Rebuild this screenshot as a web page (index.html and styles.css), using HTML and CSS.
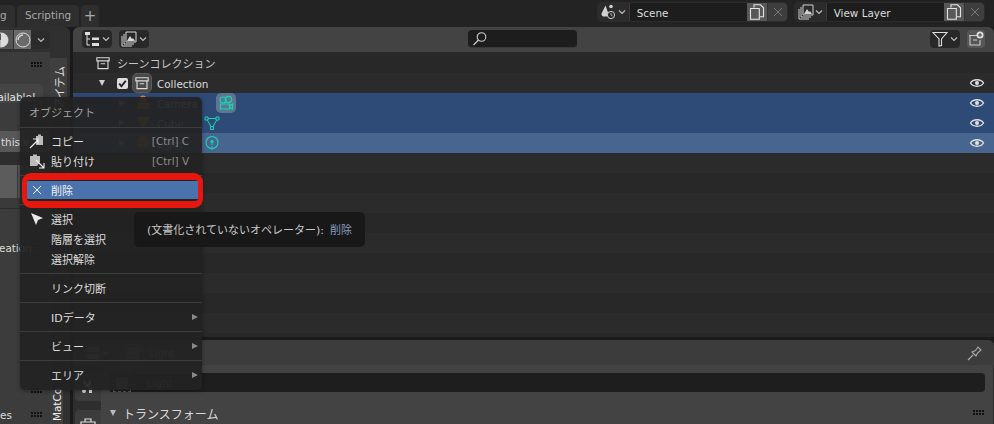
FILE: index.html
```html
<!DOCTYPE html>
<html lang="ja">
<head>
<meta charset="utf-8">
<title>Blender</title>
<link rel="stylesheet" href="styles.css">
</head>
<body>
<svg class="defs" width="0" height="0" aria-hidden="true">
  <symbol id="i-box" viewBox="0 0 16 16"><path d="M1 2h14v3.500H1zM2.300 5.500V14.500h11.400V5.500M5.500 8.800h5" fill="none" stroke="currentColor" stroke-width="1.300"/></symbol>
  <symbol id="i-eye" viewBox="0 0 16 16"><path d="M1.500 8C4 3.700 12 3.700 14.500 8 12 12.300 4 12.300 1.500 8z" fill="none" stroke="currentColor" stroke-width="1.400"/><circle cx="8" cy="8" r="2" fill="currentColor"/></symbol>
  <symbol id="i-chev" viewBox="0 0 8 6"><path d="M1 1.500l3 3 3-3" fill="none" stroke="currentColor" stroke-width="1.200"/></symbol>
  <symbol id="i-copy" viewBox="0 0 16 16"><path d="M5 3.500V.8h6.500l3 3v9H11M1.500 4.500h8.800v10.700H1.500z" fill="none" stroke="currentColor" stroke-width="1.100"/></symbol>
  <symbol id="i-x" viewBox="0 0 12 12"><path d="M2 2l8 8M10 2l-8 8" fill="none" stroke="currentColor" stroke-width="1"/></symbol>
  <symbol id="i-layer" viewBox="0 0 16 16"><path d="M1 5v10h10M3 3v10h10" fill="none" stroke="currentColor" stroke-width="1"/><path d="M5 1h10v10H5z" fill="none" stroke="currentColor" stroke-width="1"/><path d="M6 10l3-5 2 3 1-1 2 3z" fill="currentColor"/></symbol>
</svg>

<div class="app">
  <div class="topbar">
    <div class="tabs">
      <span class="tab tab-cut">g</span>
      <span class="tab tab-script">Scripting</span>
      <span class="tab tab-plus">+</span>
    </div>
    <div class="grow"></div>
    <div class="selector">
      <span class="sel-icon">
        <svg class="ic16" viewBox="0 0 16 16"><path d="M4.500 1.500L7 8.500a3 3 0 0 1-1 4H2a3 3 0 0 1-1-4z" fill="#d0d0d0"/><circle cx="10" cy="2.500" r="1.800" fill="#d0d0d0"/><circle cx="10" cy="11" r="3.600" fill="#282828" stroke="#d0d0d0"/><path d="M10 9v2l1.500 1" fill="none" stroke="#d0d0d0" stroke-width=".8"/></svg>
        <svg class="chev"><use href="#i-chev"/></svg>
      </span>
      <span class="sel-field">Scene</span>
      <span class="sel-copy"><svg class="ic16"><use href="#i-copy"/></svg></span>
      <span class="sel-x"><svg class="ic12"><use href="#i-x"/></svg></span>
    </div>
    <div class="selector">
      <span class="sel-icon">
        <svg class="ic16"><use href="#i-layer"/></svg>
        <svg class="chev"><use href="#i-chev"/></svg>
      </span>
      <span class="sel-field">View Layer</span>
      <span class="sel-copy"><svg class="ic16"><use href="#i-copy"/></svg></span>
      <span class="sel-x"><svg class="ic12"><use href="#i-x"/></svg></span>
    </div>
  </div>

  <div class="main">
    <div class="left">
      <div class="left-head">
        <span class="shade-half"><svg class="ic16" viewBox="0 0 16 16"><circle cx="4" cy="8" r="7" fill="none" stroke="#ddd"/><path d="M4 8V1a7 7 0 0 1 0 14z" fill="#ddd"/><path d="M-3 8a7 7 0 0 0 7 7V8z" fill="#bbb"/></svg></span>
        <span class="shade-ball"><svg class="ic16" viewBox="0 0 16 16"><circle cx="8" cy="8" r="7" fill="none" stroke="#ddd"/><path d="M3 8a5 5 0 0 1 5-5" fill="none" stroke="#ddd" stroke-width="1.300"/></svg></span>
        <span class="shade-drop"><svg class="chev"><use href="#i-chev"/></svg></span>
      </div>
      <div class="left-body">
        <div class="side">
          <div class="side-head"><span class="dots"></span></div>
          <div class="side-field"><span>ailable!</span></div>
          <div class="side-gap"></div>
          <div class="side-this"><span>this v</span></div>
          <div class="side-dark"></div>
          <div class="side-grey"><span class="grey-a"></span><span class="grey-b"></span></div>
          <div class="side-line"></div>
          <div class="side-eation"><span>eation</span><span class="dots"></span></div>
          <div class="grow"></div>
          <div class="side-dotrow"><span class="dots"></span></div>
          <div class="side-es"><span>es</span><span class="dots"></span></div>
        </div>
        <div class="vtabs">
          <span class="vtab vtab-item">アイテム</span>
          <div class="grow"></div>
          <span class="vtab vtab-mat">MatCo</span>
        </div>
      </div>
    </div>

    <div class="right">
      <div class="outliner">
        <div class="o-head">
          <span class="o-btn">
            <svg class="ic16" viewBox="0 0 16 16"><path d="M1 1h5v3H1z" fill="#ddd"/><path d="M3 4v10h3M3 8h3" fill="none" stroke="#ddd"/><path d="M8 6.500h7v2.500H8zM8 12h7v3H8z" fill="#ddd"/></svg>
            <svg class="chev"><use href="#i-chev"/></svg>
          </span>
          <span class="o-btn o-btn-layer">
            <svg class="ic16"><use href="#i-layer"/></svg>
            <svg class="chev"><use href="#i-chev"/></svg>
          </span>
          <div class="o-grow-l"></div>
          <span class="o-search">
            <svg class="ic16" viewBox="0 0 16 16"><circle cx="9.500" cy="6" r="4.300" fill="none" stroke="#ccc" stroke-width="1.100"/><path d="M6.500 9L1.500 14" stroke="#ccc" stroke-width="1.300"/></svg>
          </span>
          <div class="o-grow-r"></div>
          <span class="o-btn o-btn-filter">
            <svg class="ic16" viewBox="0 0 16 16"><path d="M1 1.500h14L9.500 8v6.500L7 15V8z" fill="none" stroke="#ddd" stroke-width="1.100"/></svg>
            <svg class="chev"><use href="#i-chev"/></svg>
          </span>
          <span class="o-new">
            <svg class="ic16" viewBox="0 0 16 16"><path d="M1 4.500h8M2 5v9h10V9M5 9h4" fill="none" stroke="#ccc" stroke-width="1.100"/><circle cx="12" cy="4" r="3.500" fill="#ddd"/><path d="M10 4h4M12 2v4" stroke="#444" stroke-width="1.100"/></svg>
          </span>
        </div>
        <div class="rows">
          <div class="row row-scene">
            <svg class="ic14 scene-box"><use href="#i-box"/></svg>
            <span class="row-label scene-label">シーンコレクション</span>
          </div>
          <div class="row row-even">
            <span class="tri tri-open"></span>
            <span class="check"><svg viewBox="0 0 10 10"><path d="M2 5l2 2.500 4-5" fill="none" stroke="#222" stroke-width="1.800"/></svg></span>
            <span class="box-active"><svg class="ic14"><use href="#i-box"/></svg></span>
            <span class="row-label">Collection</span>
            <div class="grow"></div>
            <svg class="ic16 eye"><use href="#i-eye"/></svg>
          </div>
          <div class="row row-sel">
            <span class="tri-side"></span>
            <svg class="ic16 obj" viewBox="0 0 16 16"><circle cx="8" cy="4" r="3.500" fill="#e58a3c"/><path d="M2 8h12v6H2z" fill="#e58a3c"/></svg>
            <span class="row-label">Camera</span>
            <span class="data-active">
              <svg class="ic16" viewBox="0 0 16 16"><circle cx="5" cy="5" r="3" fill="none" stroke="#19d6b0" stroke-width="1.200"/><circle cx="10.500" cy="4.500" r="3.200" fill="none" stroke="#19d6b0" stroke-width="1.200"/><path d="M2.500 9h9v5h-9zM11.500 11l3-2v5l-3-2" fill="none" stroke="#19d6b0" stroke-width="1.200"/></svg>
            </span>
            <div class="grow"></div>
            <svg class="ic16 eye"><use href="#i-eye"/></svg>
          </div>
          <div class="row row-sel">
            <span class="tri-side"></span>
            <svg class="ic16 obj" viewBox="0 0 16 16"><path d="M1 2h14L8 14z" fill="#e58a3c"/></svg>
            <span class="row-label">Cube</span>
            <svg class="ic16 data-plain" viewBox="0 0 16 16"><path d="M2.500 3.500h11L8.500 12.500h-1z" fill="none" stroke="#19d6b0"/><path d="M1 2h3v3H1zM12 2h3v3h-3zM6.500 11.500h3v3h-3z" fill="#2e4a75" stroke="#19d6b0"/></svg>
            <div class="grow"></div>
            <svg class="ic16 eye"><use href="#i-eye"/></svg>
          </div>
          <div class="row row-act">
            <span class="tri-side"></span>
            <svg class="ic16 obj" viewBox="0 0 16 16"><circle cx="8" cy="7" r="6" fill="#e58a3c"/></svg>
            <span class="row-label">Light</span>
            <svg class="ic16 data-plain" viewBox="0 0 16 16"><circle cx="8" cy="7.500" r="6" fill="none" stroke="#19d6b0" stroke-width="1.100"/><circle cx="8" cy="6.500" r="1.600" fill="#19d6b0"/><path d="M8 8v7" stroke="#19d6b0" stroke-width="1" stroke-dasharray="2 1"/></svg>
            <div class="grow"></div>
            <svg class="ic16 eye"><use href="#i-eye"/></svg>
          </div>
          <div class="row row-even"></div>
          <div class="row row-odd"></div>
          <div class="row row-even"></div>
          <div class="row row-odd"></div>
          <div class="row row-even"></div>
          <div class="row row-odd"></div>
          <div class="row row-even"></div>
          <div class="row row-odd"></div>
          <div class="row row-even"></div>
        </div>
      </div>

      <div class="props">
        <div class="p-head">
          <span class="p-toggle"><svg class="ic16" viewBox="0 0 16 16"><rect x="1" y="2" width="14" height="5" rx="2.500" fill="#888"/><rect x="1" y="9" width="14" height="5" rx="2.500" fill="#888"/></svg><svg class="chev"><use href="#i-chev"/></svg></span>
          <span class="p-light"><span class="p-square"></span>Light</span>
          <div class="grow"></div>
          <svg class="ic16 pin" viewBox="0 0 16 16"><path d="M1 15l5-5M5 7l4 4 1.500-3L14 5 11 2 8.500 5.500z" fill="none" stroke="#aaa" stroke-width="1.100"/></svg>
        </div>
        <div class="p-body">
          <div class="p-tabs">
            <span class="p-tab">
              <svg class="ic16" viewBox="0 0 16 16"><path d="M5 1v3l2 2 2-2V1a4 4 0 0 1 1 6v2H5V7a4 4 0 0 1 0-6z" fill="#ddd"/><circle cx="4" cy="13" r="2" fill="#ddd"/><rect x="9" y="10" width="3" height="5" fill="#ddd"/></svg>
            </span>
            <span class="p-tab">
              <svg class="ic16" viewBox="0 0 16 16"><path d="M1 5h14v9H1zM5 5V2h6v3" fill="none" stroke="#ddd" stroke-width="1.200"/></svg>
            </span>
          </div>
          <div class="p-main">
            <div class="p-strip"></div>
            <div class="p-fieldrow">
              <div class="p-field"><span class="p-square"></span><span class="p-field-label">Light</span></div>
            </div>
            <div class="p-panel">
              <span class="tri tri-open tri-panel"></span>
              <span class="p-title">トランスフォーム</span>
              <div class="grow"></div>
              <span class="dots"></span>
            </div>
          </div>
        </div>
      </div>
    </div>
  </div>

  <div class="menu">
    <div class="m-title">オブジェクト</div>
    <div class="m-sep m-sep-title"></div>
    <div class="m-row">
      <svg class="ic16 m-ic" viewBox="0 0 16 16"><path d="M7 3h2V1.500h3V3h2v9H7z" fill="#bbb"/><path d="M1 15l8-8M4 6h5v5" fill="none" stroke="#eee" stroke-width="1.100"/></svg>
      <span class="m-text">コピー</span><span class="m-key">[Ctrl] C</span>
    </div>
    <div class="m-row">
      <svg class="ic16 m-ic" viewBox="0 0 16 16"><path d="M1 3h3V1.500h4V3h3v6l-3 4H1z" fill="#bbb"/><path d="M7 7l8 8M15 10v5h-5" fill="none" stroke="#eee" stroke-width="1.100"/></svg>
      <span class="m-text">貼り付け</span><span class="m-key">[Ctrl] V</span>
    </div>
    <div class="m-sep"></div>
    <div class="m-row m-row-hot">
      <svg class="ic12 m-ic m-ic-x"><use href="#i-x"/></svg>
      <span class="m-text">削除</span>
    </div>
    <div class="m-sep"></div>
    <div class="m-row">
      <svg class="ic16 m-ic" viewBox="0 0 16 16"><path d="M2 2l12 5-5 2-2 5z" fill="#e8e8e8"/></svg>
      <span class="m-text">選択</span>
    </div>
    <div class="m-row"><span class="m-text m-noicon">階層を選択</span></div>
    <div class="m-row"><span class="m-text m-noicon">選択解除</span></div>
    <div class="m-sep"></div>
    <div class="m-row"><span class="m-text m-noicon">リンク切断</span></div>
    <div class="m-sep"></div>
    <div class="m-row"><span class="m-text m-noicon">IDデータ</span><span class="m-arrow"></span></div>
    <div class="m-sep"></div>
    <div class="m-row"><span class="m-text m-noicon">ビュー</span><span class="m-arrow"></span></div>
    <div class="m-sep"></div>
    <div class="m-row"><span class="m-text m-noicon">エリア</span><span class="m-arrow"></span></div>
  </div>

  <div class="callout"></div>

  <div class="tooltip">(文書化されていないオペレーター):<span class="tip-op">削除</span></div>
</div>
</body>
</html>
```
FILE: styles.css
```css
* { box-sizing: border-box; }
html, body { margin: 0; padding: 0; }
body { width: 994px; height: 424px; overflow: hidden; background: #1a1a1a; }
.defs { position: absolute; }
svg { display: block; flex: none; }
.grow { flex: 1 1 0; }
.ic16 { width: 16px; height: 16px; }
.ic14 { width: 14px; height: 14px; }
.ic12 { width: 12px; height: 12px; }
.chev { width: 8px; height: 6px; color: #bbb; margin-left: 1px; }

.app {
  position: relative;
  width: 994px;
  height: 424px;
  overflow: hidden;
  display: flex;
  flex-direction: column;
  font-family: "DejaVu Sans", "Noto Sans CJK JP", sans-serif;
  font-size: 11px;
  color: #d8d8d8;
}

/* top bar */
.topbar { flex: none; height: 27px; background: #232323; display: flex; align-items: flex-start; padding-right: 9px; }
.tabs { display: flex; align-self: flex-end; gap: 2px; height: 22px; }
.tab { background: #2e2e2e; color: #a8a8a8; border-radius: 4px 4px 0 0; display: flex; align-items: center; justify-content: center; font-size: 10.400px; padding-bottom: 2px; }
.tab-cut { width: 15px; justify-content: flex-start; padding-left: 0; border-top-left-radius: 0; }
.tab-script { width: 62px; }
.tab-plus { width: 18px; font-size: 15px; padding-bottom: 0; }
.selector { display: flex; height: 20px; margin-top: 2px; margin-left: 6px; width: 191px; background: #3a3a3a; border-radius: 5px; overflow: hidden; border: 1px solid #2c2c2c; }
.sel-icon { width: 31px; background: #2b2b2b; display: flex; align-items: center; padding-left: 3px; color: #d0d0d0; }
.sel-field { width: 120px; background: #1d1d1d; border-left: 1px solid #3a3a3a; padding-left: 7px; line-height: 20px; color: #dcdcdc; font-size: 10.400px; }
.sel-copy { width: 20px; background: #585858; display: flex; align-items: center; justify-content: center; color: #e4e4e4; }
.sel-x { width: 20px; background: #3e3e3e; display: flex; align-items: center; justify-content: center; color: #777; border-left: 1px solid #333; }

/* main */
.main { flex: 1 1 0; display: flex; gap: 3px; min-height: 0; }

/* left column */
.left { width: 70px; flex: none; display: flex; flex-direction: column; background: #303030; border-top-right-radius: 6px; overflow: hidden; }
.left-head { flex: none; height: 25px; display: flex; align-items: center; justify-content: flex-end; padding-right: 20px; background: #303030; }
.shade-half, .shade-ball { width: 18px; height: 19px; display: flex; align-items: center; justify-content: center; }
.shade-half { background: #555; width: 13px; justify-content: flex-end; overflow: hidden; }
.shade-ball { background: #6a6a6a; margin-left: 1px; }
.shade-drop { width: 19px; height: 19px; background: #2b2b2b; border-radius: 0 5px 5px 0; display: flex; align-items: center; justify-content: center; }
.left-body { flex: 1 1 0; display: flex; min-height: 0; }
.side { width: 50px; flex: none; display: flex; flex-direction: column; background: #3c3c3c; overflow: hidden; white-space: nowrap; color: #dcdcdc; font-size: 10.400px; }
.side-head { flex: none; height: 32px; display: flex; align-items: center; justify-content: flex-end; padding: 0 8px 6px 0; }
.side-field { flex: none; height: 19px; background: #444; border-radius: 0 5px 0 0; margin-right: 7px; display: flex; justify-content: flex-end; align-items: flex-end; padding-right: 7px; color: #e4e4e4; }
.side-gap { flex: none; height: 28px; background: #3c3c3c; }
.side-this { flex: none; height: 21px; background: #585858; display: flex; align-items: center; justify-content: flex-start; padding-left: 1px; }
.side-dark { flex: none; height: 13px; background: #2e2e2e; }
.side-grey { flex: none; height: 33px; display: flex; gap: 1px; }
.grey-a { width: 17px; background: #5c5c5c; }
.grey-b { flex: 1; background: #565656; }
.side-line { flex: none; height: 11px; border-bottom: 1px solid #2c2c2c; background: #3a3a3a; }
.side-eation { flex: none; height: 78px; display: flex; align-items: center; justify-content: space-between; padding: 0 8px 0 0; margin-left: -1px; }
.side-dotrow { flex: none; height: 24px; display: flex; justify-content: flex-end; align-items: center; padding: 6px 8px 0 0; }
.side-es { flex: none; height: 24px; display: flex; align-items: center; justify-content: space-between; padding: 6px 8px 0 0; }
.dots { display: block; width: 11px; height: 6px; background-image: radial-gradient(circle at 1px 1px, #111 .9px, transparent 1px); background-size: 3px 3px; flex: none; }
.vtabs { width: 17px; flex: none; display: flex; flex-direction: column; padding-top: 6px; }
.vtab { writing-mode: vertical-rl; text-orientation: sideways; transform: rotate(180deg); background: #3f3f3f; display: flex; align-items: center; justify-content: flex-start; width: 17px; }
.vtab-item { height: 60px; padding-top: 9px; color: #e0e0e0; }
.vtab-mat { height: 35px; color: #eee; width: 13px; padding-top: 3px; font-size: 10.400px; }

/* right column */
.right { flex: 1 1 0; min-width: 0; display: flex; flex-direction: column; gap: 3px; }
.outliner { flex: none; height: 310px; background: #282828; border-radius: 6px 6px 0 0; overflow: hidden; display: flex; flex-direction: column; }
.o-head { flex: none; height: 25px; background: #434343; display: flex; align-items: center; padding: 0 9px 1px 9px; }
.o-btn { width: 30px; height: 18px; background: #282828; border-radius: 4px; display: flex; align-items: center; justify-content: center; gap: 1px; }
.o-btn-layer { margin-left: 7px; }
.o-btn-filter { margin-right: 7px; }
.o-search { width: 109px; height: 18px; background: #1d1d1d; border-radius: 4px; border-bottom: 1px solid #3a3a3a; display: flex; align-items: center; padding-left: 4px; }
.o-grow-l { flex: 319 1 0; }
.o-grow-r { flex: 353 1 0; }
.o-new { width: 18px; height: 18px; background: #565656; border-radius: 4px; display: flex; align-items: center; justify-content: center; }
.rows { flex: 1 1 0; display: flex; flex-direction: column; overflow: hidden; }
.row { flex: none; height: 20px; display: flex; align-items: center; color: #dcdcdc; padding-right: 9px; }
.row-scene { height: 21px; background: #282828; }
.row-even { background: #2b2b2b; }
.row-odd { background: #282828; }
.row-sel { background: #2e4b78; }
.row-act { background: #48658f; }
.row-label { white-space: nowrap; font-size: 10.400px; }
.scene-box { margin-left: 23px; color: #d8d8d8; }
.scene-label { margin-left: 7px; color: #c4c4c4; font-size: 11px; }
.tri { width: 0; height: 0; flex: none; }
.tri-open { margin-left: 26px; border-left: 3.500px solid transparent; border-right: 3.500px solid transparent; border-top: 6px solid #cfcfcf; }
.check { width: 11px; height: 11px; margin-left: 12px; background: #dcdcdc; border-radius: 2px; flex: none; }
.box-active { width: 20px; height: 20px; margin-left: 4px; background: #4a4a4a; border-radius: 5px; border: 1px solid #5a5a5a; display: flex; align-items: center; justify-content: center; flex: none; }
.row-even .row-label { margin-left: 5px; padding-top: 2px; }
.row-sel .row-label, .row-act .row-label { margin-left: 6px; width: 44px; flex: none; padding-top: 2px; }
.tri-side { width: 0; height: 0; margin-left: 46px; border-top: 3.500px solid transparent; border-bottom: 3.500px solid transparent; border-left: 6px solid #bbb; flex: none; }
.obj { margin-left: 10px; }
.eye { color: #e0e0e0; }
.data-active { width: 20px; height: 20px; margin-left: 15px; background: #5d7692; border-radius: 5px; display: flex; align-items: center; justify-content: center; flex: none; }
.data-plain { margin-left: 3px; }

/* properties */
.props { flex: 1 1 0; min-height: 0; display: flex; flex-direction: column; background: #2e2e2e; border-top-right-radius: 6px; overflow: hidden; }
.p-head { flex: none; height: 25px; background: #3c3c3c; display: flex; align-items: center; padding: 0 11px 0 12px; font-size: 10.400px; }
.p-toggle { display: flex; align-items: center; opacity: .8; width: 25px; }
.p-light { display: flex; align-items: center; gap: 10px; margin-left: 17px; color: #888; }
.p-square { display: block; width: 12px; height: 12px; background: #666; flex: none; outline: 1px dashed #555; outline-offset: 2px; }
.p-body { flex: 1 1 0; min-height: 0; display: flex; }
.p-tabs { width: 28px; flex: none; display: flex; flex-direction: column; align-items: flex-end; gap: 9px; padding-top: 6px; }
.p-tab { width: 26px; height: 30px; flex: none; background: #3c3c3c; border-radius: 4px 0 0 4px; display: flex; align-items: center; justify-content: center; }
.p-main { flex: 1 1 0; min-width: 0; display: flex; flex-direction: column; background: #434343; margin-right: 1px; }
.p-strip { flex: none; height: 8px; background: #434343; }
.p-fieldrow { flex: none; height: 19px; background: #434343; padding: 0 8px 0 9px; }
.p-field { height: 19px; background: #1e1e1e; border-radius: 0 4px 4px 0; display: flex; align-items: center; padding-left: 6px; color: #777; font-size: 10.400px; }
.p-field-label { margin-left: 19px; }
.p-panel { flex: 1 1 0; display: flex; align-items: center; padding: 10px 9px 0 9px; background: #434343; }
.tri-panel { margin-left: 0; border-top-color: #bbb; }
.p-title { margin-left: 7px; font-size: 12px; color: #d8d8d8; white-space: nowrap; }

/* popup menu */
.menu {
  position: absolute;
  left: 20px;
  top: 97px;
  width: 182px;
  height: 293px;
  background: rgba(34, 34, 34, .93);
  border-radius: 5px;
  box-shadow: 0 1px 4px rgba(0, 0, 0, .35);
  display: flex;
  flex-direction: column;
  white-space: nowrap;
}
.m-title { flex: none; height: 30px; padding-top: 3px; line-height: 27px; padding-left: 9px; color: #a0a0a0; }
.m-sep { flex: none; height: 1px; margin: 4px 0; background: #3d3d3d; }
.m-sep-title { margin: 0 0 3px; }
.m-row { flex: none; height: 20px; display: flex; align-items: center; color: #dcdcdc; }
.m-ic { margin-left: 9px; }
.m-text { margin-left: 6px; }
.m-noicon { margin-left: 31px; }
.m-key { margin-left: auto; padding-right: 13px; color: #8c8c8c; font-size: 10.400px; }
.m-row-hot { height: 18px; margin: 1px 3px 1px 7px; background: #4a72ad; color: #f2f2f2; border-radius: 1px; }
.m-ic-x { margin-left: 4px; margin-right: 2px; color: #f0f0f0; }
.m-row-hot .m-text { margin-left: 6px; }
.m-arrow { margin-left: auto; margin-right: 4px; width: 0; height: 0; border-top: 3.500px solid transparent; border-bottom: 3.500px solid transparent; border-left: 6px solid #8a8a8a; }

/* annotation */
.callout { position: absolute; left: 22px; top: 173px; width: 181px; height: 35px; border: solid #e5170f; border-width: 7px 5px; border-radius: 9px; }

/* tooltip */
.tooltip { position: absolute; left: 134px; top: 212px; width: 231px; height: 35px; background: #181818; border-radius: 5px; padding-left: 13px; line-height: 37px; color: #c8c8c8; white-space: nowrap; }
.tip-op { margin-left: 6px; color: #8a9cc0; }
```
